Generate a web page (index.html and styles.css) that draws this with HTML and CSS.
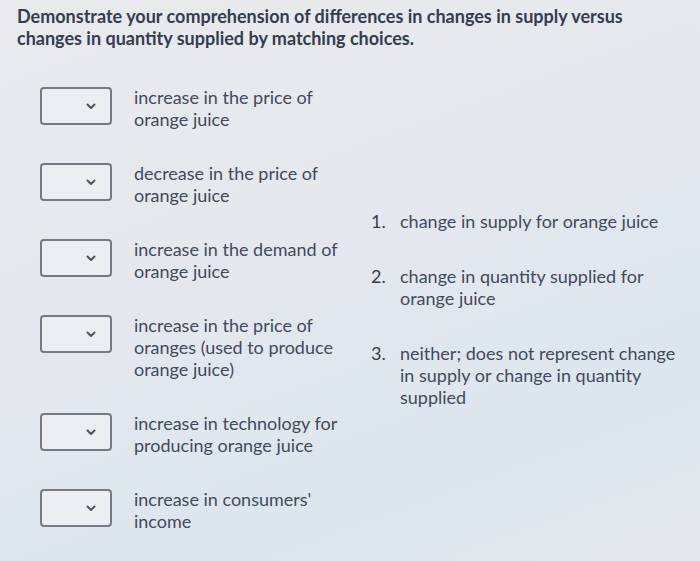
FILE: index.html
```html
<!DOCTYPE html>
<html lang="en">
<head>
    <meta charset="UTF-8">
    <meta name="viewport" content="width=device-width, initial-scale=1.0">
    <link rel="stylesheet" href="styles.css">
</head>
<body>
    <div class="question">
        <p class="prompt">Demonstrate your comprehension of differences in changes in supply versus changes in quantity supplied by matching choices.</p>
        <div class="match">
            <div class="premises">
                <div class="premise">
                    <div class="select"><svg width="10" height="7" viewBox="0 0 10 7"><polyline points="1.5,1.5 5,5 8.5,1.5"/></svg></div>
                    <span class="premise-text">increase in the price of orange juice</span>
                </div>
                <div class="premise">
                    <div class="select"><svg width="10" height="7" viewBox="0 0 10 7"><polyline points="1.5,1.5 5,5 8.5,1.5"/></svg></div>
                    <span class="premise-text">decrease in the price of orange juice</span>
                </div>
                <div class="premise">
                    <div class="select"><svg width="10" height="7" viewBox="0 0 10 7"><polyline points="1.5,1.5 5,5 8.5,1.5"/></svg></div>
                    <span class="premise-text">increase in the demand of orange juice</span>
                </div>
                <div class="premise">
                    <div class="select"><svg width="10" height="7" viewBox="0 0 10 7"><polyline points="1.5,1.5 5,5 8.5,1.5"/></svg></div>
                    <span class="premise-text">increase in the price of oranges (used to produce orange juice)</span>
                </div>
                <div class="premise">
                    <div class="select"><svg width="10" height="7" viewBox="0 0 10 7"><polyline points="1.5,1.5 5,5 8.5,1.5"/></svg></div>
                    <span class="premise-text">increase in technology for producing orange juice</span>
                </div>
                <div class="premise">
                    <div class="select"><svg width="10" height="7" viewBox="0 0 10 7"><polyline points="1.5,1.5 5,5 8.5,1.5"/></svg></div>
                    <span class="premise-text">increase in consumers' income</span>
                </div>
            </div>
            <ol class="choices">
                <li><span class="num">1.</span><span>change in supply for orange juice</span></li>
                <li><span class="num">2.</span><span>change in quantity supplied for orange juice</span></li>
                <li><span class="num">3.</span><span>neither; does not represent change in supply or change in quantity supplied</span></li>
            </ol>
        </div>
    </div>
</body>
</html>
```

FILE: styles.css
```css
body {
    margin: 0;
    height: 561px;
    font-family: Lato, "Open Sans", sans-serif;
    font-size: 18px;
    line-height: 22px;
    color: #434a5c;
    background: linear-gradient(160deg, #e9eaed 0%, #e4e8ee 45%, #dce6ef 75%, #e3e8ec 100%);
    overflow: hidden;
}
.question {
    padding: 5px 17px 0;
}
.prompt {
    margin: 0;
    font-weight: bold;
    color: #353c4f;
    width: 640px;
}
.match {
    display: flex;
    align-items: center;
    margin-top: 37px;
}
.premises {
    display: flex;
    flex-direction: column;
    gap: 32px;
    padding-left: 23px;
}
.premise {
    display: flex;
    align-items: flex-start;
    gap: 22px;
}
.select {
    width: 54px;
    height: 34px;
    margin-top: 1px;
    padding-right: 14px;
    border: 2px solid #757a84;
    border-radius: 4px;
    background: #eceef2;
    display: flex;
    align-items: center;
    justify-content: flex-end;
}
.select svg {
    fill: none;
    stroke: #4f5560;
    stroke-width: 2;
    stroke-linecap: round;
    stroke-linejoin: round;
}
.premise-text {
    width: 212px;
}
.choices {
    list-style: none;
    margin: 0 0 0 25px;
    padding: 0;
    display: flex;
    flex-direction: column;
    gap: 33px;
}
.choices li {
    display: flex;
    width: 310px;
}
.choices li span:last-child {
    width: 281px;
}
.num {
    width: 29px;
    flex: none;
    color: #353c4f;
}
```
